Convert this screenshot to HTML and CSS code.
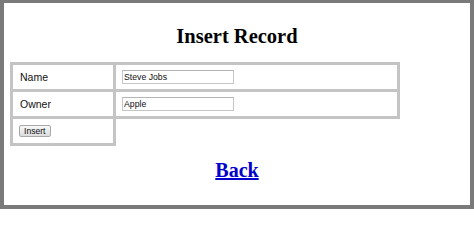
FILE: index.html
```html
<!DOCTYPE html>
<html lang="en">
<head>
<meta charset="utf-8">
<title>Insert Record</title>
<link rel="stylesheet" href="styles.css">
</head>
<body>
<div class="frame">
  <h1 class="title">Insert Record</h1>
  <form class="record-form">
    <table class="record-table">
      <tr class="first-row">
        <td class="label"><div class="cell">Name</div></td>
        <td class="field"><div class="cell"><input class="text-input" type="text" value="Steve Jobs"></div></td>
      </tr>
      <tr>
        <td class="label"><div class="cell">Owner</div></td>
        <td class="field"><div class="cell"><input class="text-input" type="text" value="Apple"></div></td>
      </tr>
      <tr>
        <td class="label"><div class="cell"><button class="insert-btn" type="button">Insert</button></div></td>
        <td class="empty"></td>
      </tr>
    </table>
  </form>
  <div class="back-wrap"><a class="back-link" href="#">Back</a></div>
</div>
</body>
</html>
```

FILE: styles.css
```css
html, body {
  margin: 0;
  padding: 0;
  background: #ffffff;
}

.frame {
  box-sizing: border-box;
  width: 474px;
  height: 209px;
  border-style: solid;
  border-color: #7a7a7a;
  border-width: 3px 4px 4px 4px;
  padding: 21px 6px 0 6px;
  background: #ffffff;
}

.title {
  margin: 0;
  text-align: center;
  font-family: "Liberation Serif", "Times New Roman", serif;
  font-weight: bold;
  font-size: 20.5px;
  line-height: 24px;
  color: #000;
}

.record-form {
  margin: 14px 0 0 0;
}

.record-table {
  width: 390px;
  table-layout: fixed;
  border-collapse: separate;
  border-spacing: 0;
  font-family: "Liberation Sans", Arial, sans-serif;
}

.record-table td {
  padding: 0;
  vertical-align: middle;
}

.record-table .label {
  width: 93px;
  padding-left: 7px;
  border-left: 3px solid #c4c4c4;
  border-right: 3px solid #c4c4c4;
  border-bottom: 3px solid #c4c4c4;
  font-size: 10.5px;
  color: #111;
}

.record-table .field {
  padding-left: 6px;
  border-right: 3px solid #c4c4c4;
  border-bottom: 3px solid #c4c4c4;
}

.record-table .first-row td {
  border-top: 3px solid #c4c4c4;
}

.record-table .empty {
  border: none;
}

.cell {
  height: 24px;
  display: flex;
  align-items: center;
}

.text-input {
  box-sizing: border-box;
  width: 112px;
  height: 14px;
  margin: 0;
  padding: 0 1px;
  border: 1px solid #c6c6c6;
  border-top-color: #b4b4b4;
  font-family: "Liberation Sans", Arial, sans-serif;
  font-size: 8.7px;
  color: #111;
  background: #fff;
  outline: none;
}

.insert-btn {
  box-sizing: border-box;
  height: 12px;
  margin: 0 0 0 -1px;
  padding: 0 4px;
  border: 1px solid #a9a9a9;
  border-radius: 2px;
  background: linear-gradient(#f8f8f8, #dcdcdc);
  font-family: "Liberation Sans", Arial, sans-serif;
  font-size: 8.6px;
  line-height: 10px;
  color: #111;
}

.back-wrap {
  margin-top: 12px;
  text-align: center;
  font-family: "Liberation Serif", "Times New Roman", serif;
  font-weight: bold;
  font-size: 20px;
  line-height: 24px;
}

.back-link {
  color: #0000cc;
  text-decoration: underline;
}
```
